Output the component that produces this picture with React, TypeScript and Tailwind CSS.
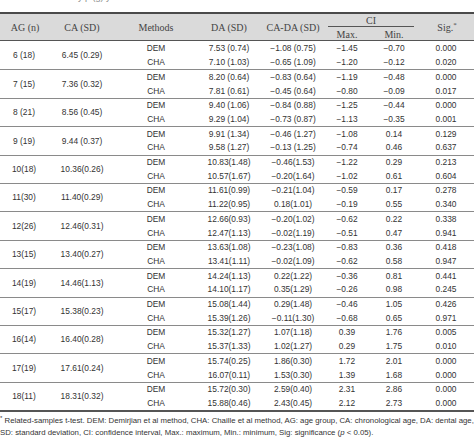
import React from "react";

type Row = [string, string, string, string, string];
type Group = { ag: string; ca: string; dem: Row; cha: Row };

const groups: Group[] = [
  { ag: "6 (18)", ca: "6.45 (0.29)", dem: ["7.53 (0.74)", "−1.08 (0.75)", "−1.45", "−0.70", "0.000"], cha: ["7.10 (1.03)", "−0.65 (1.09)", "−1.20", "−0.12", "0.020"] },
  { ag: "7 (15)", ca: "7.36 (0.32)", dem: ["8.20 (0.64)", "−0.83 (0.64)", "−1.19", "−0.48", "0.000"], cha: ["7.81 (0.61)", "−0.45 (0.64)", "−0.80", "−0.09", "0.017"] },
  { ag: "8 (21)", ca: "8.56 (0.45)", dem: ["9.40 (1.06)", "−0.84 (0.88)", "−1.25", "−0.44", "0.000"], cha: ["9.29 (1.04)", "−0.73 (0.87)", "−1.13", "−0.35", "0.001"] },
  { ag: "9 (19)", ca: "9.44 (0.37)", dem: ["9.91 (1.34)", "−0.46 (1.27)", "−1.08", "0.14", "0.129"], cha: ["9.58 (1.27)", "−0.13 (1.25)", "−0.74", "0.46", "0.637"] },
  { ag: "10(18)", ca: "10.36(0.26)", dem: ["10.83(1.48)", "−0.46(1.53)", "−1.22", "0.29", "0.213"], cha: ["10.57(1.67)", "−0.20(1.64)", "−1.02", "0.61", "0.604"] },
  { ag: "11(30)", ca: "11.40(0.29)", dem: ["11.61(0.99)", "−0.21(1.04)", "−0.59", "0.17", "0.278"], cha: ["11.22(0.95)", "0.18(1.01)", "−0.19", "0.55", "0.340"] },
  { ag: "12(26)", ca: "12.46(0.31)", dem: ["12.66(0.93)", "−0.20(1.02)", "−0.62", "0.22", "0.338"], cha: ["12.47(1.13)", "−0.02(1.19)", "−0.51", "0.47", "0.941"] },
  { ag: "13(15)", ca: "13.40(0.27)", dem: ["13.63(1.08)", "−0.23(1.08)", "−0.83", "0.36", "0.418"], cha: ["13.41(1.11)", "−0.02(1.09)", "−0.62", "0.58", "0.947"] },
  { ag: "14(19)", ca: "14.46(1.13)", dem: ["14.24(1.13)", "0.22(1.22)", "−0.36", "0.81", "0.441"], cha: ["14.10(1.17)", "0.35(1.29)", "−0.26", "0.98", "0.245"] },
  { ag: "15(17)", ca: "15.38(0.23)", dem: ["15.08(1.44)", "0.29(1.48)", "−0.46", "1.05", "0.426"], cha: ["15.39(1.26)", "−0.11(1.30)", "−0.68", "0.65", "0.971"] },
  { ag: "16(14)", ca: "16.40(0.28)", dem: ["15.32(1.27)", "1.07(1.18)", "0.39", "1.76", "0.005"], cha: ["15.37(1.33)", "1.02(1.27)", "0.29", "1.75", "0.010"] },
  { ag: "17(19)", ca: "17.61(0.24)", dem: ["15.74(0.25)", "1.86(0.30)", "1.72", "2.01", "0.000"], cha: ["16.07(0.11)", "1.53(0.30)", "1.39", "1.68", "0.000"] },
  { ag: "18(11)", ca: "18.31(0.32)", dem: ["15.72(0.30)", "2.59(0.40)", "2.31", "2.86", "0.000"], cha: ["15.88(0.46)", "2.43(0.45)", "2.12", "2.73", "0.000"] },
];

const cols = "grid grid-cols-[48px_68px_80px_62px_70px_42px_48px_56px]";
const cell = "flex items-center justify-center whitespace-nowrap";

export default function App() {
  return (
    <div
      className="w-[474px] h-[440px] bg-white text-[#333] overflow-hidden"
      style={{ fontFamily: '"Liberation Sans", Arial, sans-serif' }}
    >
      <div className="h-[12px] overflow-hidden relative">
        <div className="absolute top-[-9px] left-[78px] text-[9px] text-[#888] whitespace-nowrap">
          y p (g) y
        </div>
      </div>

      {/* header */}
      <div
        className={`${cols} grid-rows-[13px_14px] h-[29px] bg-[#dadada] border-t-2 border-[#4a4a4a] border-b border-b-[#555] text-[10px] text-[#444]`}
        style={{ fontFamily: '"Liberation Serif", serif' }}
      >
        <div className={`${cell} row-span-2 pl-[2px]`}>AG (n)</div>
        <div className={`${cell} row-span-2`}>CA (SD)</div>
        <div className={`${cell} row-span-2`}>Methods</div>
        <div className={`${cell} row-span-2 pl-[4px]`}>DA (SD)</div>
        <div className={`${cell} row-span-2`}>CA-DA (SD)</div>
        <div className="col-span-2 flex items-end justify-center pr-[2px]">
          <div className="w-full h-[12px] flex items-center justify-center border-b border-[#555] mr-[2px]">CI</div>
        </div>
        <div className={`${cell} row-span-2 pl-[2px]`}>
          Sig.<sup className="text-[7px] -top-[3px]">*</sup>
        </div>
        <div className={`${cell} col-start-6 pr-[4px]`}>Max.</div>
        <div className={`${cell}`}>Min.</div>
      </div>

      {/* body */}
      <div className="border-b-2 border-[#555] text-[8.4px]">
        {groups.map((g, i) => (
          <div
            key={g.ag}
            className={`${cols} grid-rows-2 h-[28.4px] ${i > 0 ? "border-t-[1.5px] border-[#8a8a8a]" : ""}`}
          >
            <div className={`${cell} row-span-2`}>{g.ag}</div>
            <div className={`${cell} row-span-2`}>{g.ca}</div>
            {(["DEM", "CHA"] as const).map((m) => {
              const r = m === "DEM" ? g.dem : g.cha;
              return (
                <React.Fragment key={m}>
                  <div className={`${cell}`}>{m}</div>
                  <div className={`${cell} pl-[4px]`}>{r[0]}</div>
                  <div className={`${cell}`}>{r[1]}</div>
                  <div className={`${cell} pr-[4px]`}>{r[2]}</div>
                  <div className={`${cell}`}>{r[3]}</div>
                  <div className={`${cell}`}>{r[4]}</div>
                </React.Fragment>
              );
            })}
          </div>
        ))}
      </div>

      {/* footnote */}
      <div className="pt-[3px] text-[7.8px] leading-[12px] text-[#333] whitespace-nowrap">
        <div>
          <sup className="text-[6px]">*</sup> Related-samples t-test. DEM: Demirjian et al method, CHA: Chaille et al method, AG: age group, CA: chronological age, DA: dental age,
        </div>
        <div>
          SD: standard deviation, CI: confidence interval, Max.: maximum, Min.: minimum, Sig: significance (<i>p</i> &lt; 0.05).
        </div>
      </div>
    </div>
  );
}
